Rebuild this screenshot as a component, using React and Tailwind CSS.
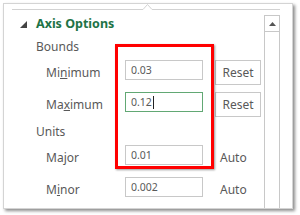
import React from "react";

function Label({ children }) {
  return (
    <div className="w-[79px] h-[20px] mt-[3px] flex items-center text-[12px] text-[#595959] leading-none">
      {children}
    </div>
  );
}

function Field({ value, focused, cursor }) {
  return (
    <div
      className={
        "w-[78px] h-[20px] flex items-center pl-[5px] text-[10.5px] text-[#595959] leading-none bg-white border " +
        (focused ? "border-[#62a874]" : "border-[#c8c8c8]")
      }
    >
      <span>{value}</span>
      {cursor && <span className="ml-[1px] w-[1px] h-[13px] bg-[#222]" />}
    </div>
  );
}

function Reset() {
  return (
    <div className="ml-[12px] w-[46px] h-[25px] flex items-center justify-center border border-[#c8c8c8] bg-white text-[12px] text-[#595959] leading-none">
      Reset
    </div>
  );
}

function Auto() {
  return (
    <div className="ml-[12px] mt-[3px] h-[20px] flex items-center pl-[5px] text-[12px] text-[#595959] leading-none">
      Auto
    </div>
  );
}

export default function App() {
  return (
    <div className="relative w-[300px] h-[215px] bg-white overflow-hidden font-['Noto_Sans',sans-serif]">
      <div className="ml-[3px] mt-[3px] w-[290px] h-[206px] border border-[#d4d4d4] bg-white shadow-[2px_2px_3px_rgba(0,0,0,0.45)] flex flex-col">
        <svg width="268" height="8" className="block ml-[8px] shrink-0">
          <path
            d="M0 5.5 H131 L135.5 0.5 L140 5.5 H268"
            fill="none"
            stroke="#d2d2d2"
            strokeWidth="1"
          />
        </svg>
        <div className="flex flex-1 min-h-0">
          <div className="flex-1 flex flex-col">
            <div className="h-[25px] flex items-center">
              <svg width="7" height="7" className="ml-[16px] block">
                <polygon points="7,0 7,7 0,7" fill="#444" />
              </svg>
              <span className="ml-[9px] text-[12.5px] font-bold text-[#217346] leading-none">
                Axis Options
              </span>
            </div>
            <div className="h-[19px] flex items-center pl-[32px] text-[12px] text-[#595959] leading-none">
              Bounds
            </div>
            <div className="mt-[4px] flex items-start pl-[42px]">
              <Label>
                Mi<span className="underline">n</span>imum
              </Label>
              <Field value="0.03" />
              <Reset />
            </div>
            <div className="mt-[7px] flex items-start pl-[42px]">
              <Label>
                Ma<span className="underline">x</span>imum
              </Label>
              <Field value="0.12" focused cursor />
              <Reset />
            </div>
            <div className="mt-[5px] h-[20px] flex items-center pl-[32px] text-[12px] text-[#595959] leading-none">
              Units
            </div>
            <div className="mt-[3px] flex items-start pl-[42px]">
              <Label>
                Ma<span className="underline">j</span>or
              </Label>
              <Field value="0.01" />
              <Auto />
            </div>
            <div className="mt-[9px] flex items-start pl-[42px]">
              <Label>
                M<span className="underline">i</span>nor
              </Label>
              <Field value="0.002" />
              <Auto />
            </div>
          </div>
          <div className="w-[16px] mt-[3px] mr-[12px] border-l border-r border-t border-[#c8c8c8] flex flex-col">
            <div className="h-[16px] border-b border-[#c8c8c8] flex items-center justify-center">
              <svg width="7" height="4" className="block">
                <polygon points="3.5,0 7,4 0,4" fill="#555" />
              </svg>
            </div>
          </div>
        </div>
      </div>
      <div className="absolute left-[115px] top-[44px] w-[99px] h-[125px] border-[3px] border-[#ff0000] shadow-[1px_1px_2px_rgba(0,0,0,0.4)]" />
    </div>
  );
}
